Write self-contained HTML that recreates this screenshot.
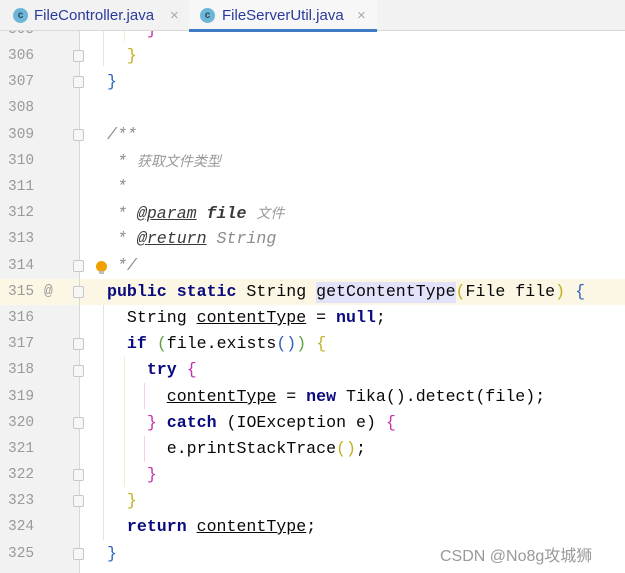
<!DOCTYPE html>
<html><head><meta charset="utf-8"><style>
*{margin:0;padding:0;box-sizing:border-box}
body{width:625px;height:573px;overflow:hidden;background:#fff;position:relative;font-family:"Liberation Mono",monospace}
#tabs{position:absolute;left:0;top:0;width:625px;height:31px;background:#f2f2f2;border-bottom:1px solid #d8d8d8;z-index:5;font-family:"Liberation Sans",sans-serif}
.tab{position:absolute;top:0;height:31px;font-size:15px;color:#2a3a9a;line-height:31px}
.ic{position:absolute;top:8px;width:15px;height:15px;border-radius:50%;background:#6db6d8;color:#2b4a5e;font-size:10px;line-height:15px;text-align:center;font-weight:bold}
.x{color:#aaa;font-size:15px;position:absolute;top:0}
#gut{position:absolute;left:0;top:31px;width:80px;height:542px;background:#f2f2f2}
#fold{position:absolute;left:79px;top:31px;width:1px;height:542px;background:#d8d8d8}
.ln{position:absolute;left:0;width:80px;height:26px;font-size:14.5px;color:#9a9a9a;line-height:26px;padding-left:8px}
.fi{position:absolute;left:73px;width:11px;height:12px;border:1px solid #c8c8c8;background:#f7f7f7;border-radius:2px}
.code{position:absolute;left:107px;height:26px;line-height:26px;font-size:16.6px;color:#080808;white-space:pre}
.k{color:#0a0a80;font-weight:bold}
.c{color:#8c8c8c;font-style:italic}
.t{color:#3a3a3a;font-weight:bold;font-style:italic;text-decoration:underline}
.u{text-decoration:underline}
.y{color:#c0b020}.b{color:#3060c0}.m{color:#c030b0}.g{color:#60a040}
.g1{position:absolute;width:1px;background:#dde4f2}
</style></head><body>
<div id="tabs">
<div class="tab" style="left:0;width:188px"><span class="ic" style="left:13px">c</span><span style="position:absolute;left:34px">FileController.java</span><span class="x" style="left:170px">×</span></div>
<div class="tab" style="left:189px;width:188px;background:#f7f7f7"><span class="ic" style="left:11px">c</span><span style="position:absolute;left:33px">FileServerUtil.java</span><span class="x" style="left:168px">×</span><div style="position:absolute;left:0;bottom:-1px;width:188px;height:3px;background:#3d7bc4"></div></div>
</div>
<div id="gut"></div>
<div style="position:absolute;left:0;top:279px;width:625px;height:26px;background:#fcf7e4"></div>
<div id="fold"></div>
<div class="g1" style="left:103px;top:31px;height:35px"></div>
<div class="g1" style="left:103px;top:305px;height:235px"></div>
<div class="g1" style="left:124px;top:31px;height:10px;background:#f0f0c8"></div>
<div class="g1" style="left:124px;top:357px;height:130px;background:#f0f0c8"></div>
<div class="g1" style="left:144px;top:383px;height:26px;background:#f4d0ec"></div>
<div class="g1" style="left:144px;top:436px;height:26px;background:#f4d0ec"></div>
<div style="position:absolute;left:316px;top:282px;width:140px;height:21px;background:#e2e2fa"></div>
<div class="ln" style="top:17px">305</div><div class="ln" style="top:43px">306</div><div class="ln" style="top:69px">307</div><div class="ln" style="top:95px">308</div><div class="ln" style="top:122px">309</div><div class="ln" style="top:148px">310</div><div class="ln" style="top:174px">311</div><div class="ln" style="top:200px">312</div><div class="ln" style="top:226px">313</div><div class="ln" style="top:253px">314</div><div class="ln" style="top:279px">315<span style="position:absolute;left:44px">@</span></div><div class="ln" style="top:305px">316</div><div class="ln" style="top:331px">317</div><div class="ln" style="top:357px">318</div><div class="ln" style="top:384px">319</div><div class="ln" style="top:410px">320</div><div class="ln" style="top:436px">321</div><div class="ln" style="top:462px">322</div><div class="ln" style="top:488px">323</div><div class="ln" style="top:514px">324</div><div class="ln" style="top:541px">325</div>
<div class="fi" style="top:50px"></div><div class="fi" style="top:76px"></div><div class="fi" style="top:129px"></div><div class="fi" style="top:260px"></div><div class="fi" style="top:286px"></div><div class="fi" style="top:338px"></div><div class="fi" style="top:365px"></div><div class="fi" style="top:417px"></div><div class="fi" style="top:469px"></div><div class="fi" style="top:495px"></div><div class="fi" style="top:548px"></div>
<div style="position:absolute;left:96px;top:261px;width:11px;height:11px;border-radius:50%;background:#f0a000"></div>
<div style="position:absolute;left:99px;top:271px;width:5px;height:3px;background:#c0c0c0"></div>
<div class="code" style="top:17px">    <span class="m">}</span></div>
<div class="code" style="top:43px">  <span class="y">}</span></div>
<div class="code" style="top:69px"><span class="b">}</span></div>
<div class="code c" style="top:122px">/**</div>
<div class="code c" style="top:148px"> * <span style="font-family:'Noto Sans CJK SC',sans-serif;font-size:14px;color:#999">获取文件类型</span></div>
<div class="code c" style="top:174px"> *</div>
<div class="code c" style="top:200px"> * <span class="t" style="font-weight:normal">@param</span> <span style="color:#3a3a3a;font-weight:bold">file</span> <span style="font-family:'Noto Sans CJK SC',sans-serif;font-size:14px;color:#999">文件</span></div>
<div class="code c" style="top:226px"> * <span class="t" style="font-weight:normal">@return</span> String</div>
<div class="code c" style="top:253px"> */</div>
<div class="code" style="top:279px"><span class="k">public static</span> String getContentType<span class="y">(</span>File file<span class="y">)</span> <span class="b">{</span></div>
<div class="code" style="top:305px">  String <span class="u">contentType</span> = <span class="k">null</span>;</div>
<div class="code" style="top:331px">  <span class="k">if</span> <span class="g">(</span>file.exists<span class="b">()</span><span class="g">)</span> <span class="y">{</span></div>
<div class="code" style="top:357px">    <span class="k">try</span> <span class="m">{</span></div>
<div class="code" style="top:384px">      <span class="u">contentType</span> = <span class="k">new</span> Tika().detect(file);</div>
<div class="code" style="top:410px">    <span class="m">}</span> <span class="k">catch</span> (IOException e) <span class="m">{</span></div>
<div class="code" style="top:436px">      e.printStackTrace<span class="y">()</span>;</div>
<div class="code" style="top:462px">    <span class="m">}</span></div>
<div class="code" style="top:488px">  <span class="y">}</span></div>
<div class="code" style="top:514px">  <span class="k">return</span> <span class="u">contentType</span>;</div>
<div class="code" style="top:541px"><span class="b">}</span></div>
<div style="position:absolute;left:440px;top:542px;font-family:'Liberation Sans','Noto Sans CJK SC',sans-serif;font-size:16px;color:#999">CSDN @No8g攻城狮</div>
</body></html>
